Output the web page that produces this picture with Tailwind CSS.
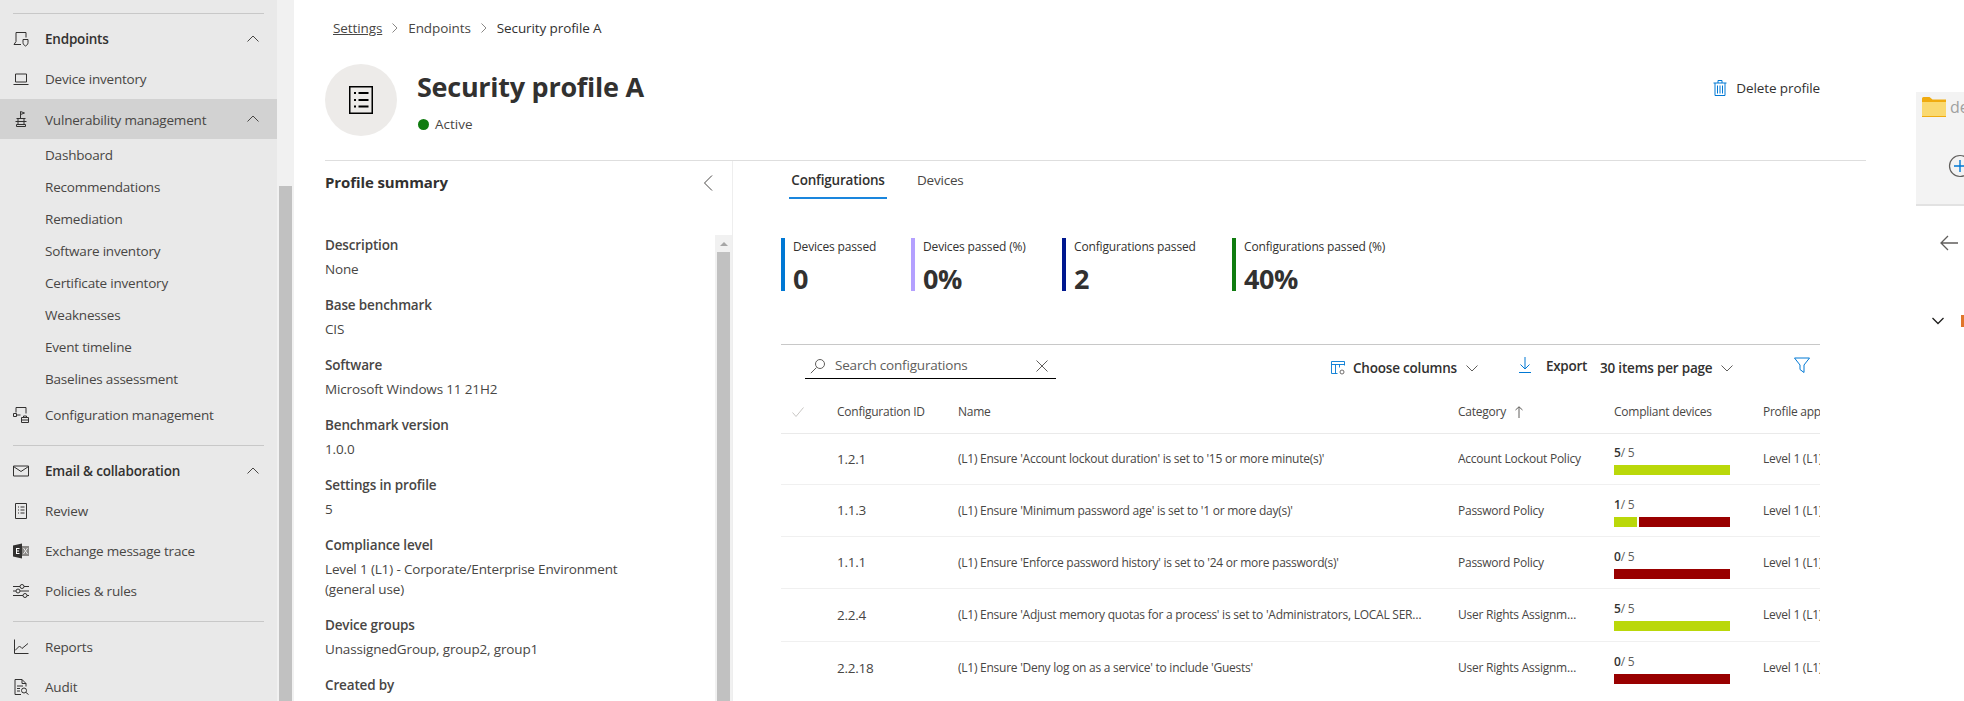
<!DOCTYPE html>
<html lang="en">
<head>
<meta charset="UTF-8">
<title>Security profile A</title>
<script src="https://cdn.jsdelivr.net/npm/@tailwindcss/browser@4"></script>
</head>
<body class="font-['Open_Sans',sans-serif] bg-white text-[#323130]">
<div class="flex h-[701px] w-[1964px] overflow-hidden">

	<!-- Left nav -->
	<nav class="w-[277px] h-full shrink-0 bg-[#e9e9e9] pt-[13px] text-[13.5px] text-[#484644] tracking-[-0.2px]">
		<div class="mx-[13px] h-px bg-[#c8c8c8]"></div>
		<div class="mt-[5px] h-10 flex items-center">
			<svg class="ml-[13px] w-4 h-4 shrink-0" viewBox="0 0 16 16" fill="none" stroke="#323130" stroke-width="1"><path d="M3 1.500h10v5M3 1.500v9M3 10.500L1 13.500h7M10 8.500h5v3c0 2-1.500 3-2.500 3.500c-1-.5-2.500-1.500-2.500-3.500z"/></svg>
			<span class="ml-4 font-semibold text-[#323130]">Endpoints</span>
			<svg class="ml-auto mr-[18px] w-3 h-3" viewBox="0 0 12 12" fill="none" stroke="#484644"><path d="M.5 8.500L6 3l5.500 5.500"/></svg>
		</div>
		<div class="h-10 flex items-center">
			<svg class="ml-[13px] w-4 h-4 shrink-0" viewBox="0 0 16 16" fill="none" stroke="#323130"><path d="M2.500 3h11v8h-11zM.5 13.500h15"/></svg>
			<span class="ml-4">Device inventory</span>
		</div>
		<div class="h-10 flex items-center bg-[#d2d2d2]">
			<svg class="ml-[13px] w-4 h-4 shrink-0" viewBox="0 0 16 16" fill="none" stroke="#323130"><path d="M7.500 7V.5l4 1.500-4 1.500M3.500 7.500h9M5 7.500v3M11 7.500v3M2.500 10.500h11M3.500 13.500h9v2h-9zM5 10.500v3M11 10.500v3"/></svg>
			<span class="ml-4 mt-[2px]">Vulnerability management</span>
			<svg class="ml-auto mr-[18px] w-3 h-3" viewBox="0 0 12 12" fill="none" stroke="#484644"><path d="M.5 8.500L6 3l5.500 5.500"/></svg>
		</div>
		<div class="h-8 leading-8 pl-[45px]">Dashboard</div>
		<div class="h-8 leading-8 pl-[45px]">Recommendations</div>
		<div class="h-8 leading-8 pl-[45px]">Remediation</div>
		<div class="h-8 leading-8 pl-[45px]">Software inventory</div>
		<div class="h-8 leading-8 pl-[45px]">Certificate inventory</div>
		<div class="h-8 leading-8 pl-[45px]">Weaknesses</div>
		<div class="h-8 leading-8 pl-[45px]">Event timeline</div>
		<div class="h-8 leading-8 pl-[45px]">Baselines assessment</div>
		<div class="h-10 flex items-center">
			<svg class="ml-[13px] w-4 h-4 shrink-0" viewBox="0 0 16 16" fill="none" stroke="#323130"><path d="M3 5.500V.5h10v6M.5 6.500h3v3h-3zM3.500 8h4M8.500 10.500h7v5h-7zM10.500 10.500V9h3v1.500M8.500 13h7"/></svg>
			<span class="ml-4">Configuration management</span>
		</div>
		<div class="mx-[13px] mt-[10px] h-px bg-[#c8c8c8]"></div>
		<div class="mt-[5px] h-10 flex items-center">
			<svg class="ml-[13px] w-4 h-4 shrink-0" viewBox="0 0 16 16" fill="none" stroke="#323130"><path d="M.5 3h15v10H.5zM.5 3.500L8 8.500l7.500-5"/></svg>
			<span class="ml-4 font-semibold text-[#323130]">Email &amp; collaboration</span>
			<svg class="ml-auto mr-[18px] w-3 h-3" viewBox="0 0 12 12" fill="none" stroke="#484644"><path d="M.5 8.500L6 3l5.500 5.500"/></svg>
		</div>
		<div class="h-10 flex items-center">
			<svg class="ml-[13px] w-4 h-4 shrink-0" viewBox="0 0 16 16" fill="none" stroke="#323130"><path d="M2.500.5h11v15h-11zM5 4h1M7.500 4h4M5 7h1M7.500 7h4M5 10h1M7.500 10h4"/></svg>
			<span class="ml-4">Review</span>
		</div>
		<div class="h-10 flex items-center">
			<svg class="ml-[13px] w-4 h-4 shrink-0" viewBox="0 0 16 16"><path d="M0 2.500L9 .5v15l-9-2z" fill="#323130"/><path d="M9 3h7v10H9z" fill="#8a8886"/><path d="M3 5h3.500v1H4v1.500h2V8.500H4V10h2.500v1H3z" fill="#fff"/><path d="M10.500 5l4 6M14.500 5l-4 6" stroke="#e9e9e9"/></svg>
			<span class="ml-4">Exchange message trace</span>
		</div>
		<div class="h-10 flex items-center">
			<svg class="ml-[13px] w-4 h-4 shrink-0" viewBox="0 0 16 16" fill="none" stroke="#323130"><path d="M0 3.500h7M11 3.500h5M0 8h3M7 8h9M0 12.500h10M14 12.500h2"/><circle cx="9" cy="3.500" r="2"/><circle cx="5" cy="8" r="2"/><circle cx="12" cy="12.500" r="2"/></svg>
			<span class="ml-4">Policies &amp; rules</span>
		</div>
		<div class="mx-[13px] mt-[10px] h-px bg-[#c8c8c8]"></div>
		<div class="mt-[5px] h-10 flex items-center">
			<svg class="ml-[13px] w-4 h-4 shrink-0" viewBox="0 0 16 16" fill="none" stroke="#323130"><path d="M1.500.5v14h14M2 11.500L6.500 7l2.500 2.500L15 4.500"/></svg>
			<span class="ml-4">Reports</span>
		</div>
		<div class="h-10 flex items-center">
			<svg class="ml-[13px] w-4 h-4 shrink-0" viewBox="0 0 16 16" fill="none" stroke="#323130"><path d="M8 15.500H2V.5h7l4 4v3M9 .5v4h4M4 7h6M4 9.500h3M4 12h3"/><circle cx="11" cy="11.500" r="2.500"/><path d="M13 13.500l2.500 2"/></svg>
			<span class="ml-4">Audit</span>
		</div>
	</nav>

	<!-- Page scrollbar -->
	<div class="w-[17px] h-full shrink-0 bg-[#f1f1f1] pl-[2px] pr-[2px] pt-[186px]">
		<div class="h-full w-[13px] bg-[#c1c1c1]"></div>
	</div>

	<!-- Main -->
	<main class="w-[1622px] shrink-0 h-full pl-[31px] pr-[50px] flex flex-col">
		<div class="h-14 flex items-center pl-2 text-[13.5px] text-[#484644] tracking-[-0.1px]">
			<span class="underline">Settings</span>
			<svg class="w-[10px] h-[10px] mx-[8px]" viewBox="0 0 10 10" fill="none" stroke="#8a8886"><path d="M2.500.5L7 5 2.500 9.500"/></svg>
			<span>Endpoints</span>
			<svg class="w-[10px] h-[10px] mx-[8px]" viewBox="0 0 10 10" fill="none" stroke="#8a8886"><path d="M2.500.5L7 5 2.500 9.500"/></svg>
			<span class="text-[#323130]">Security profile A</span>
		</div>

		<header class="mt-2 h-[97px] flex items-start border-b border-[#dedede]">
			<div class="w-[72px] h-[72px] rounded-full bg-[#edebe9] flex items-center justify-center shrink-0">
				<svg class="w-6 h-7" viewBox="0 0 24 28" fill="none" stroke="#000" stroke-width="1.500"><path d="M.75.75h22.500v26.500H.75z"/><path d="M5 7h2M9.500 7h10M5 14h2M9.500 14h10M5 20.500h2M9.500 20.500h10" stroke-width="2"/></svg>
			</div>
			<div class="ml-5 mt-[5px]">
				<h1 class="text-[27px] leading-9 font-bold text-[#323130] tracking-[-0.27px]">Security profile A</h1>
				<div class="mt-[9px] h-5 flex items-center text-[13.5px] text-[#484644]">
					<span class="ml-px w-[11px] h-[11px] rounded-full bg-[#107c10]"></span>
					<span class="ml-[6px]">Active</span>
				</div>
			</div>
			<div class="ml-auto mr-[46px] mt-[14px] h-5 flex items-center text-[13.5px] tracking-[-0.1px]">
				<svg class="w-[14px] h-4" viewBox="0 0 14 16" fill="none" stroke="#0078d4"><path d="M.5 3h13M5 3V.5h4V3M2 3v12.500h10V3M4.500 5.500v8M7 5.500v8M9.500 5.500v8"/></svg>
				<span class="ml-[9px]">Delete profile</span>
			</div>
		</header>

		<div class="flex flex-1 min-h-0">
			<!-- Profile summary -->
			<aside class="w-[408px] shrink-0 border-r border-[#eeeeee] flex flex-col">
				<div class="h-[43px] flex items-center justify-between shrink-0">
					<h2 class="text-[15px] font-bold text-[#323130] tracking-[-0.1px]">Profile summary</h2>
					<svg class="mr-[19px] w-[10px] h-4" viewBox="0 0 10 16" fill="none" stroke="#484644"><path d="M9 .5L1.500 8 9 15.500"/></svg>
				</div>
				<div class="flex flex-1 min-h-0 mt-[31px]">
					<div class="flex-1 flex flex-col gap-3 -mt-[2px] text-[13.5px] tracking-[-0.15px]">
						<div><div class="h-6 leading-6 font-semibold text-[#484644]">Description</div><div class="py-[2px] leading-5 text-[#484644]">None</div></div>
						<div><div class="h-6 leading-6 font-semibold text-[#484644]">Base benchmark</div><div class="py-[2px] leading-5 text-[#484644]">CIS</div></div>
						<div><div class="h-6 leading-6 font-semibold text-[#484644]">Software</div><div class="py-[2px] leading-5 text-[#484644]">Microsoft Windows 11 21H2</div></div>
						<div><div class="h-6 leading-6 font-semibold text-[#484644]">Benchmark version</div><div class="py-[2px] leading-5 text-[#484644]">1.0.0</div></div>
						<div><div class="h-6 leading-6 font-semibold text-[#484644]">Settings in profile</div><div class="py-[2px] leading-5 text-[#484644]">5</div></div>
						<div><div class="h-6 leading-6 font-semibold text-[#484644]">Compliance level</div><div class="py-[2px] leading-5 text-[#484644] w-[320px]">Level 1 (L1) - Corporate/Enterprise Environment (general use)</div></div>
						<div><div class="h-6 leading-6 font-semibold text-[#484644]">Device groups</div><div class="py-[2px] leading-5 text-[#484644]">UnassignedGroup, group2, group1</div></div>
						<div><div class="h-6 leading-6 font-semibold text-[#484644]">Created by</div></div>
					</div>
					<div class="w-[17px] shrink-0 bg-[#f1f1f1] flex flex-col items-center">
						<div class="h-[17px] w-full flex items-center justify-center">
							<svg class="w-2 h-1" viewBox="0 0 8 4" fill="#a6a6a6"><path d="M4 0l4 4H0z"/></svg>
						</div>
						<div class="flex-1 w-[13px] bg-[#c1c1c1]"></div>
					</div>
				</div>
			</aside>

			<!-- Configurations -->
			<section class="w-[1087px] shrink-0 pl-[48px] flex flex-col">
				<div class="h-[38px] flex ml-2 gap-7 text-[13.5px] tracking-[-0.2px]">
					<div class="w-[98px] flex items-center justify-center pt-[2px] border-b-2 border-[#1a86dd] font-semibold text-[#323130]">Configurations</div>
					<div class="flex items-center px-[2px] text-[#484644]">Devices</div>
				</div>

				<div class="mt-[39px] h-[53px] flex">
					<div class="w-[130px] flex border-l-4 border-[#0078d4] pl-2 shrink-0">
						<div><div class="h-[18px] leading-[18px] text-[12px] text-[#323130] tracking-[-0.15px]">Devices passed</div><div class="mt-[8px] text-[27px] leading-[30px] font-bold text-[#323130] tracking-[-0.5px]">0</div></div>
					</div>
					<div class="w-[151px] flex border-l-4 border-[#b4a0ff] pl-2 shrink-0">
						<div><div class="h-[18px] leading-[18px] text-[12px] text-[#323130] tracking-[-0.15px]">Devices passed (%)</div><div class="mt-[8px] text-[27px] leading-[30px] font-bold text-[#323130] tracking-[-0.5px]">0%</div></div>
					</div>
					<div class="w-[170px] flex border-l-4 border-[#00188f] pl-2 shrink-0">
						<div><div class="h-[18px] leading-[18px] text-[12px] text-[#323130] tracking-[-0.15px]">Configurations passed</div><div class="mt-[8px] text-[27px] leading-[30px] font-bold text-[#323130] tracking-[-0.5px]">2</div></div>
					</div>
					<div class="w-[180px] flex border-l-4 border-[#107c10] pl-2 shrink-0">
						<div><div class="h-[18px] leading-[18px] text-[12px] text-[#323130] tracking-[-0.15px]">Configurations passed (%)</div><div class="mt-[8px] text-[27px] leading-[30px] font-bold text-[#323130] tracking-[-0.5px]">40%</div></div>
					</div>
				</div>

				<div class="mt-[53px] w-[1039px] border-t border-[#c8c8c8]">
					<!-- Toolbar -->
					<div class="h-[34px] flex items-center text-[13.5px] tracking-[-0.2px]">
						<div class="ml-[24px] w-[251px] h-[34px] border-b border-black flex items-center shrink-0 text-[#605e5c] pt-[8px]">
							<svg class="ml-[5px] w-4 h-4 shrink-0" viewBox="0 0 16 16" fill="none" stroke="#605e5c"><circle cx="10" cy="6" r="4.500"/><path d="M6.500 9.500L.8 15.200"/></svg>
							<span class="ml-[9px]">Search configurations</span>
							<svg class="ml-auto mr-[8px] w-3 h-3" viewBox="0 0 12 12" fill="none" stroke="#605e5c"><path d="M.5.500l11 11M11.500.500l-11 11"/></svg>
						</div>
						<div class="ml-[275px] w-[188px] mt-[12px] flex items-center shrink-0">
							<svg class="w-[14px] h-[14px]" viewBox="0 0 14 14" fill="none" stroke="#0078d4" stroke-width=".9"><path d="M.5.500h13v4M.5 3.500h13M.5.500v12h6M4.500 3.500v9M8.500 3.500v3"/><circle cx="11" cy="11" r="2" stroke="#605e5c"/></svg>
							<span class="ml-2 font-semibold text-[#323130]">Choose columns</span>
							<svg class="ml-[9px] w-3 h-3" viewBox="0 0 12 12" fill="none" stroke="#605e5c"><path d="M.5 3.500L6 9l5.500-5.500"/></svg>
						</div>
						<div class="w-[81px] mt-[6px] flex items-center shrink-0">
							<svg class="w-3 h-4" viewBox="0 0 12 16" fill="none" stroke="#0078d4"><path d="M6 0v12M1.500 7.500L6 12l4.500-4.500M0 15.500h12"/></svg>
							<span class="ml-[15px] mt-[2px] font-semibold text-[#323130] tracking-[-0.3px]">Export</span>
						</div>
						<div class="w-[194px] mt-[12px] flex items-center shrink-0">
							<span class="font-semibold text-[#323130]">30 items per page</span>
							<svg class="ml-[9px] w-3 h-3" viewBox="0 0 12 12" fill="none" stroke="#605e5c"><path d="M.5 3.500L6 9l5.500-5.500"/></svg>
						</div>
						<svg class="w-[16px] h-[16px] mt-[6px]" viewBox="0 0 16 16" fill="none" stroke="#0078d4"><path d="M.5 1h15L10 8v7.500L6 12.500V8z"/></svg>
					</div>

					<!-- Table -->
					<div class="h-[55px] pt-3 flex items-center text-[12px] text-[#484644] border-b border-[#eaeaea] tracking-[-0.25px]">
						<div class="w-[56px] shrink-0 pl-[11px]">
							<svg class="w-3 h-3" viewBox="0 0 12 12" fill="none" stroke="#c8c6c4"><path d="M.5 6.500l3.500 4 7.500-9"/></svg>
						</div>
						<div class="w-[121px] shrink-0">Configuration ID</div>
						<div class="w-[500px] shrink-0">Name</div>
						<div class="w-[156px] shrink-0 flex items-center">Category
							<svg class="ml-2 w-[10px] h-3" viewBox="0 0 10 12" fill="none" stroke="#605e5c"><path d="M5 12V.8M1.500 4L5 .8 8.500 4"/></svg>
						</div>
						<div class="w-[149px] shrink-0">Compliant devices</div>
						<div class="w-[57px] shrink-0 overflow-hidden whitespace-nowrap">Profile applicability</div>
					</div>

					<div class="h-[51px] flex items-center text-[12px] text-[#484644] border-b border-[#f0f0f0] tracking-[-0.25px]">
						<div class="w-[56px] shrink-0"></div>
						<div class="w-[121px] shrink-0 text-[13.5px]">1.2.1</div>
						<div class="w-[468px] mr-[32px] shrink-0 truncate">(L1) Ensure 'Account lockout duration' is set to '15 or more minute(s)'</div>
						<div class="w-[125px] mr-[31px] shrink-0 truncate">Account Lockout Policy</div>
						<div class="w-[116px] mr-[33px] shrink-0">
							<div class="h-4 leading-4 mt-[2px] mb-1 text-[#605e5c]"><b class="font-semibold text-[#323130]">5</b>/ 5</div>
							<div class="h-[10px] bg-[#bad80a]"></div>
						</div>
						<div class="w-[57px] shrink-0 overflow-hidden whitespace-nowrap">Level 1 (L1)</div>
					</div>
					<div class="h-[52px] flex items-center text-[12px] text-[#484644] border-b border-[#f0f0f0] tracking-[-0.25px]">
						<div class="w-[56px] shrink-0"></div>
						<div class="w-[121px] shrink-0 text-[13.5px]">1.1.3</div>
						<div class="w-[468px] mr-[32px] shrink-0 truncate">(L1) Ensure 'Minimum password age' is set to '1 or more day(s)'</div>
						<div class="w-[125px] mr-[31px] shrink-0 truncate">Password Policy</div>
						<div class="w-[116px] mr-[33px] shrink-0">
							<div class="h-4 leading-4 mt-[2px] mb-1 text-[#605e5c]"><b class="font-semibold text-[#323130]">1</b>/ 5</div>
							<div class="h-[10px] flex gap-[2px]"><div class="w-[23px] bg-[#bad80a]"></div><div class="flex-1 bg-[#990000]"></div></div>
						</div>
						<div class="w-[57px] shrink-0 overflow-hidden whitespace-nowrap">Level 1 (L1)</div>
					</div>
					<div class="h-[52px] flex items-center text-[12px] text-[#484644] border-b border-[#f0f0f0] tracking-[-0.25px]">
						<div class="w-[56px] shrink-0"></div>
						<div class="w-[121px] shrink-0 text-[13.5px]">1.1.1</div>
						<div class="w-[468px] mr-[32px] shrink-0 truncate">(L1) Ensure 'Enforce password history' is set to '24 or more password(s)'</div>
						<div class="w-[125px] mr-[31px] shrink-0 truncate">Password Policy</div>
						<div class="w-[116px] mr-[33px] shrink-0">
							<div class="h-4 leading-4 mt-[2px] mb-1 text-[#605e5c]"><b class="font-semibold text-[#323130]">0</b>/ 5</div>
							<div class="h-[10px] bg-[#990000]"></div>
						</div>
						<div class="w-[57px] shrink-0 overflow-hidden whitespace-nowrap">Level 1 (L1)</div>
					</div>
					<div class="h-[53px] flex items-center text-[12px] text-[#484644] border-b border-[#f0f0f0] tracking-[-0.25px]">
						<div class="w-[56px] shrink-0"></div>
						<div class="w-[121px] shrink-0 text-[13.5px]">2.2.4</div>
						<div class="w-[468px] mr-[32px] shrink-0 truncate">(L1) Ensure 'Adjust memory quotas for a process' is set to 'Administrators, LOCAL SERVICE, NETWORK SERVICE'</div>
						<div class="w-[122px] mr-[34px] shrink-0 truncate">User Rights Assignment</div>
						<div class="w-[116px] mr-[33px] shrink-0">
							<div class="h-4 leading-4 mt-[2px] mb-1 text-[#605e5c]"><b class="font-semibold text-[#323130]">5</b>/ 5</div>
							<div class="h-[10px] bg-[#bad80a]"></div>
						</div>
						<div class="w-[57px] shrink-0 overflow-hidden whitespace-nowrap">Level 1 (L1)</div>
					</div>
					<div class="h-[52px] flex items-center text-[12px] text-[#484644] tracking-[-0.25px]">
						<div class="w-[56px] shrink-0"></div>
						<div class="w-[121px] shrink-0 text-[13.5px]">2.2.18</div>
						<div class="w-[468px] mr-[32px] shrink-0 truncate">(L1) Ensure 'Deny log on as a service' to include 'Guests'</div>
						<div class="w-[122px] mr-[34px] shrink-0 truncate">User Rights Assignment</div>
						<div class="w-[116px] mr-[33px] shrink-0">
							<div class="h-4 leading-4 mt-[2px] mb-1 text-[#605e5c]"><b class="font-semibold text-[#323130]">0</b>/ 5</div>
							<div class="h-[10px] bg-[#990000]"></div>
						</div>
						<div class="w-[57px] shrink-0 overflow-hidden whitespace-nowrap">Level 1 (L1)</div>
					</div>
				</div>
			</section>
		</div>
	</main>

	<!-- Window behind, on the right -->
	<div class="w-[48px] shrink-0 h-full overflow-hidden">
		<div class="mt-[92px] h-[114px] bg-[#f3f3f3] border-b-2 border-[#e2e2e2] overflow-hidden">
			<div class="mt-[5px] flex items-center h-5 pl-[6px]">
				<svg class="w-6 h-5 shrink-0" viewBox="0 0 24 20"><path d="M0 1.500q0-1.500 1.500-1.500h6l3 2.500H24V20H0z" fill="#f0ab0f"/><path d="M0 5h24v14H0z" fill="#fad970"/></svg>
				<span class="ml-1 text-[16px] text-[#a0a0a0]">de</span>
			</div>
			<svg class="ml-[32px] mt-[37px] w-[24px] h-[24px]" viewBox="0 0 24 24" fill="none"><circle cx="12" cy="12" r="10.500" stroke="#605e5c" stroke-width="1.200"/><path d="M12 6v12M6 12h12" stroke="#0078d4" stroke-width="1.400"/></svg>
		</div>
		<svg class="ml-[24px] mt-[29px] w-[18px] h-[16px]" viewBox="0 0 18 16" fill="none" stroke="#605e5c" stroke-width="1.300"><path d="M18 8H1M8 1L1 8l7 7"/></svg>
		<div class="mt-[64px] flex items-center">
			<svg class="ml-[16px] w-[12px] h-[8px]" viewBox="0 0 12 8" fill="none" stroke="#201f1e" stroke-width="1.300"><path d="M.5 1L6 6.500 11.500 1"/></svg>
			<span class="ml-[17px] w-[3px] h-[12px] bg-[#e0762b]"></span>
		</div>
	</div>
</div>
</body>
</html>
